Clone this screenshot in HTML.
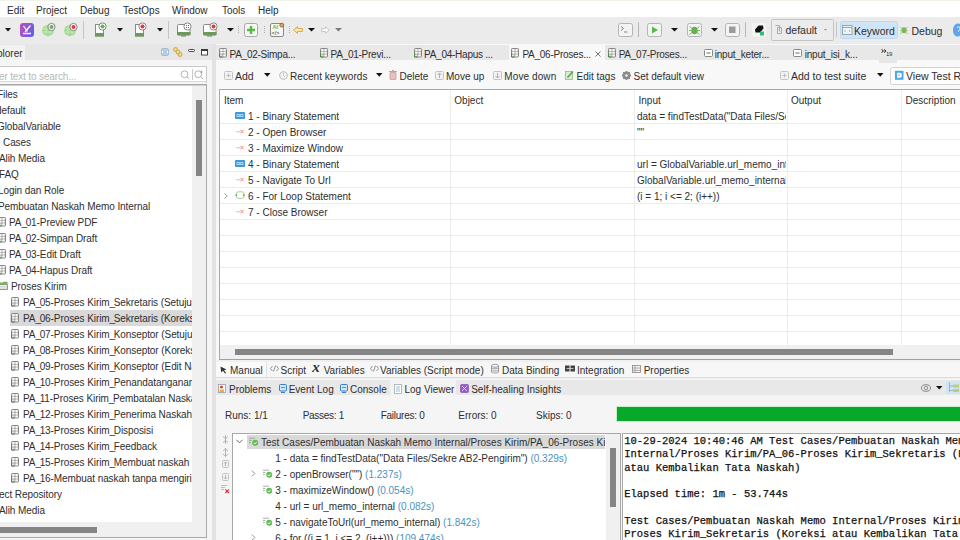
<!DOCTYPE html>
<html><head><meta charset="utf-8">
<style>
*{margin:0;padding:0;box-sizing:border-box}
html,body{width:960px;height:540px;overflow:hidden;background:#f0f0f0}
body{position:relative;font-family:"Liberation Sans",sans-serif;font-size:10px;color:#2e2e2e}
.a{position:absolute;overflow:hidden}
svg.a{overflow:visible}
.t{position:absolute;white-space:nowrap}
.m{position:absolute;white-space:pre;font-family:"Liberation Mono",monospace}
</style></head><body>
<div class="a" style="left:0px;top:0px;width:960px;height:17px;background:#fff;"></div>
<div class="a" style="left:0px;top:0px;width:960px;height:1px;background:#eef5e8;"></div>
<div class="t" style="left:7px;top:4.79px;font-size:10px;line-height:11.50px;color:#2a2a2a;">Edit</div>
<div class="t" style="left:36px;top:4.79px;font-size:10px;line-height:11.50px;color:#2a2a2a;">Project</div>
<div class="t" style="left:80px;top:4.79px;font-size:10px;line-height:11.50px;color:#2a2a2a;">Debug</div>
<div class="t" style="left:123px;top:4.79px;font-size:10px;line-height:11.50px;color:#2a2a2a;">TestOps</div>
<div class="t" style="left:172px;top:4.79px;font-size:10px;line-height:11.50px;color:#2a2a2a;">Window</div>
<div class="t" style="left:222px;top:4.79px;font-size:10px;line-height:11.50px;color:#2a2a2a;">Tools</div>
<div class="t" style="left:258px;top:4.79px;font-size:10px;line-height:11.50px;color:#2a2a2a;">Help</div>
<div class="a" style="left:0px;top:17px;width:960px;height:27px;background:#ebebeb;"></div>
<svg class="a" style="left:5px;top:28px" width="6" height="3.5" viewBox="0 0 6 3.5"><path d="M0 0H6L3.0 3.5Z" fill="#111"/></svg>
<svg class="a" style="left:20px;top:23px" width="14" height="14" viewBox="0 0 14 14"><defs><linearGradient id="pg" x1="0" y1="0" x2="1" y2="0.3"><stop offset="0" stop-color="#c24cc0"/><stop offset="1" stop-color="#6a5fe2"/></linearGradient></defs><rect x="0" y="0" width="14" height="14" rx="3" fill="url(#pg)"/><path d="M3.5 3L7.5 8.5M10.5 2.5L5 9" stroke="#fff" stroke-width="1.2" fill="none"/><path d="M3 10.5H11" stroke="#f0e8ff" stroke-width="1.5"/></svg>
<svg class="a" style="left:42px;top:22px" width="16" height="16" viewBox="0 0 16 16"><circle cx="6" cy="8.5" r="5.8" fill="#9fd68f"/><path d="M1 7H11M1 10H11M4 3V14M8 3V14" stroke="#c9efc0" stroke-width="0.9"/><circle cx="9.5" cy="5" r="3.6" fill="#fff" stroke="#7a7a7a" stroke-width="0.9"/><circle cx="9.5" cy="5" r="2" fill="#5cb84c"/></svg>
<svg class="a" style="left:64px;top:22px" width="16" height="16" viewBox="0 0 16 16"><circle cx="6" cy="8.5" r="5.8" fill="#9fd68f"/><path d="M1 7H11M1 10H11M4 3V14M8 3V14" stroke="#c9efc0" stroke-width="0.9"/><circle cx="9.5" cy="5" r="3.6" fill="#fff" stroke="#7a7a7a" stroke-width="0.9"/><circle cx="9.5" cy="5" r="2" fill="#e23a32"/></svg>
<div class="a" style="left:83px;top:21px;width:1px;height:18px;background:#c4c4c4;"></div>
<svg class="a" style="left:95px;top:22px" width="14" height="15" viewBox="0 0 14 15"><rect x="0.5" y="2.5" width="8" height="11.5" fill="#fff" stroke="#8a8a8a"/><rect x="0" y="11" width="9" height="3.5" fill="#6d9a5c"/><circle cx="7.5" cy="4.5" r="3.6" fill="#fff" stroke="#7a7a7a" stroke-width="0.9"/><circle cx="7.5" cy="4.5" r="2" fill="#5cb84c"/></svg>
<svg class="a" style="left:117px;top:28px" width="6" height="3.5" viewBox="0 0 6 3.5"><path d="M0 0H6L3.0 3.5Z" fill="#111"/></svg>
<svg class="a" style="left:135px;top:22px" width="14" height="15" viewBox="0 0 14 15"><rect x="0.5" y="2.5" width="8" height="11.5" fill="#fff" stroke="#8a8a8a"/><rect x="0" y="11" width="9" height="3.5" fill="#6d9a5c"/><circle cx="7.5" cy="4.5" r="3.6" fill="#fff" stroke="#7a7a7a" stroke-width="0.9"/><circle cx="7.5" cy="4.5" r="2" fill="#e23a32"/></svg>
<svg class="a" style="left:157px;top:28px" width="6" height="3.5" viewBox="0 0 6 3.5"><path d="M0 0H6L3.0 3.5Z" fill="#111"/></svg>
<div class="a" style="left:168px;top:21px;width:1px;height:18px;background:#c4c4c4;"></div>
<svg class="a" style="left:177px;top:22px" width="16" height="15" viewBox="0 0 16 15"><rect x="0.5" y="2.5" width="12.5" height="10.5" rx="1" fill="#fff" stroke="#8a8a8a"/><rect x="0" y="10" width="13.5" height="3.2" fill="#6d9a5c"/><rect x="4" y="13.5" width="5" height="1" fill="#777"/><circle cx="10.5" cy="4.5" r="3.6" fill="#fff" stroke="#7a7a7a" stroke-width="0.9"/><path d="M9 3.5h1M11 3.5h1M9 5.5h1M11 5.5h1" stroke="#666"/></svg>
<svg class="a" style="left:203px;top:22px" width="16" height="15" viewBox="0 0 16 15"><rect x="0.5" y="2.5" width="12.5" height="10.5" rx="1" fill="#fff" stroke="#8a8a8a"/><rect x="0" y="10" width="13.5" height="3.2" fill="#6d9a5c"/><rect x="4" y="13.5" width="5" height="1" fill="#777"/><circle cx="10.5" cy="4.5" r="3.6" fill="#fff" stroke="#7a7a7a" stroke-width="0.9"/><circle cx="10.5" cy="4.5" r="2" fill="#e23a32"/></svg>
<svg class="a" style="left:227px;top:28px" width="7" height="3.5" viewBox="0 0 7 3.5"><path d="M0 0H7L3.5 3.5Z" fill="#111"/></svg>
<svg class="a" style="left:238px;top:26px" width="1" height="8" viewBox="0 0 1 8"><path d="M0.5 0V8" stroke="#b0b0b0" stroke-dasharray="1 1"/></svg>
<svg class="a" style="left:244px;top:23px" width="14" height="14" viewBox="0 0 14 14"><rect x="0.5" y="0.5" width="13" height="13" rx="2" fill="#f6f6f6" stroke="#a8a8a8"/><path d="M7 3V11M3 7H11" stroke="#56b946" stroke-width="2.4"/></svg>
<svg class="a" style="left:264px;top:26px" width="1" height="8" viewBox="0 0 1 8"><path d="M0.5 0V8" stroke="#b0b0b0" stroke-dasharray="1 1"/></svg>
<svg class="a" style="left:270px;top:23px" width="14" height="14" viewBox="0 0 14 14"><rect x="0.5" y="0.5" width="13" height="13" rx="1.5" fill="#f6f6f6" stroke="#8a8a8a"/><text x="2.5" y="6" font-size="5.5" font-family="Liberation Sans" fill="#5cb84c" font-weight="bold">AI</text><text x="1.6" y="11.8" font-size="5.5" font-family="Liberation Sans" fill="#222">&lt;/&gt;</text><circle cx="11.8" cy="2.2" r="2" fill="#e0a050" stroke="#7a5a30" stroke-width="0.6"/></svg>
<svg class="a" style="left:289px;top:26px" width="1" height="8" viewBox="0 0 1 8"><path d="M0.5 0V8" stroke="#b0b0b0" stroke-dasharray="1 1"/></svg>
<svg class="a" style="left:293px;top:26px" width="10" height="8" viewBox="0 0 10 8"><path d="M0.6 4L4.5 0.6V2.5H9.4V5.5H4.5V7.4Z" fill="#fbe8a6" stroke="#d9a33c" stroke-width="0.9"/></svg>
<svg class="a" style="left:308px;top:28px" width="7" height="3.5" viewBox="0 0 7 3.5"><path d="M0 0H7L3.5 3.5Z" fill="#111"/></svg>
<svg class="a" style="left:321px;top:26px" width="9" height="8" viewBox="0 0 9 8"><path d="M8.4 4L4.5 0.6V2.5H0.6V5.5H4.5V7.4Z" fill="#f8f8f8" stroke="#c6c6c6" stroke-width="0.9"/></svg>
<svg class="a" style="left:335px;top:28px" width="7" height="3.5" viewBox="0 0 7 3.5"><path d="M0 0H7L3.5 3.5Z" fill="#7a7a7a"/></svg>
<svg class="a" style="left:618px;top:23px" width="15" height="14" viewBox="0 0 15 14"><rect x="0.5" y="0.5" width="14" height="13" rx="2" fill="#f4f4f4" stroke="#b4b4b4"/><path d="M3 3.5L5.5 5.5L3 7.5M6 9H9.5" stroke="#777" fill="none" stroke-width="0.9"/></svg>
<div class="a" style="left:638px;top:22px;width:1px;height:15px;background:#b8b8b8;"></div>
<svg class="a" style="left:647px;top:23px" width="15" height="14" viewBox="0 0 15 14"><rect x="0.5" y="0.5" width="14" height="13" rx="2" fill="#f4f4f4" stroke="#b4b4b4"/><path d="M5 3.5V10.5L11 7Z" fill="#5cb84c"/></svg>
<svg class="a" style="left:671px;top:28px" width="7" height="3.5" viewBox="0 0 7 3.5"><path d="M0 0H7L3.5 3.5Z" fill="#111"/></svg>
<svg class="a" style="left:687px;top:23px" width="15" height="14" viewBox="0 0 15 14"><rect x="0.5" y="0.5" width="14" height="13" rx="2" fill="#f4f4f4" stroke="#b4b4b4"/><ellipse cx="7.5" cy="7.5" rx="3.2" ry="3.8" fill="#6aae52"/><path d="M2.5 3.5L5 5.5M12.5 3.5L10 5.5M2 7.5H4.5M13 7.5H10.5M2.5 11.5L5 9.5M12.5 11.5L10 9.5" stroke="#6aae52" stroke-width="0.9"/></svg>
<svg class="a" style="left:711px;top:28px" width="7" height="3.5" viewBox="0 0 7 3.5"><path d="M0 0H7L3.5 3.5Z" fill="#111"/></svg>
<svg class="a" style="left:725px;top:23px" width="15" height="14" viewBox="0 0 15 14"><rect x="0.5" y="0.5" width="14" height="13" rx="2" fill="#f4f4f4" stroke="#b4b4b4"/><rect x="4" y="3.5" width="6.5" height="6.5" fill="#9a9a9a"/></svg>
<div class="a" style="left:745px;top:22px;width:1px;height:15px;background:#b8b8b8;"></div>
<svg class="a" style="left:752px;top:23px" width="14" height="14" viewBox="0 0 14 14"><rect x="0" y="0" width="14" height="14" rx="3" fill="#f4f4f4"/><path d="M3 6.5L6.5 2.5H11L11.5 5.5L8 9.5H3.5Z" fill="#111"/><rect x="8" y="8.5" width="4" height="4" fill="#2fbf7f"/></svg>
<svg class="a" style="left:771px;top:19px" width="63" height="22" viewBox="0 0 63 22"><rect x="0.5" y="0.5" width="62" height="21" rx="1" fill="#ececec" stroke="#c4c4c4"/><path d="M6.5 8.5h4v6h-4zM4.5 6.5h4v6" fill="none" stroke="#7cc26a" stroke-width="0.9"/><path d="M53 10h3l-1.5 1.6z" fill="#888"/></svg>
<div class="t" style="left:785.5px;top:24.32px;font-size:10.5px;line-height:12.07px;color:#2e2e2e;">default</div>
<div class="a" style="left:836px;top:22px;width:1px;height:15px;background:#c4c4c4;"></div>
<svg class="a" style="left:840px;top:21px" width="58" height="18" viewBox="0 0 58 18"><rect x="0.5" y="0.5" width="57" height="17" rx="2" fill="#cfe5f7" stroke="#bcd9f0"/><rect x="2.5" y="4.5" width="9.5" height="9" fill="#eef4f8" stroke="#8aa0a8" stroke-width="0.9"/><path d="M2.5 6.5h9.5" stroke="#8aa0a8" stroke-width="0.9"/><path d="M5.5 9L4.5 10L5.5 11M9 9L10 10L9 11" stroke="#8aa0a8" stroke-width="0.7" fill="none"/></svg>
<div class="t" style="left:854px;top:25.32px;font-size:10.5px;line-height:12.07px;color:#2e2e2e;">Keyword</div>
<svg class="a" style="left:900px;top:26px" width="8" height="8" viewBox="0 0 8 8"><ellipse cx="4" cy="4.2" rx="2.6" ry="3" fill="#7ab85a"/><path d="M0 1L2 2.5M8 1L6 2.5M0 4.5H1.5M8 4.5H6.5M0 8L2 6.5M8 8L6 6.5" stroke="#9ac87a" stroke-width="0.8"/></svg>
<div class="t" style="left:911.5px;top:25.32px;font-size:10.5px;line-height:12.07px;color:#2e2e2e;">Debug</div>
<svg class="a" style="left:953px;top:23px" width="10" height="14" viewBox="0 0 10 14"><path d="M5 0.5C8 0.5 10 3 10 6.5C10 10.5 7.5 13.5 4.5 13.5C1.8 13.5 0 11 0 7C0 3 2.5 0.5 5 0.5Z" fill="#5ea4ea"/><path d="M4 4.5C4.5 3.5 7 3.5 7 5.5C7 7 5.5 7 5.5 8.5" stroke="#fff" stroke-width="1" fill="none"/></svg>
<div class="a" style="left:0px;top:44px;width:212px;height:496px;background:#f5f5f5;"></div>
<div class="a" style="left:0px;top:44px;width:212px;height:16px;background:#e6e6e6;"></div>
<div class="a" style="left:0px;top:45px;width:25px;height:15px;background:#f3f3f3;"></div>
<div class="t" style="left:-3px;top:47.78px;font-size:10px;line-height:11.50px;color:#2e2e2e;">plorer</div>
<div class="a" style="left:0px;top:66px;width:207px;height:1px;background:#c9c9c9;"></div>
<div class="a" style="left:206px;top:66px;width:1px;height:17px;background:#c9c9c9;"></div>
<div class="a" style="left:0px;top:67px;width:206px;height:14px;background:#fff;"></div>
<div class="a" style="left:0px;top:81px;width:206px;height:1px;background:#dadada;"></div>
<div class="t" style="left:-1px;top:70.78px;font-size:10px;line-height:11.50px;color:#b8b8b8;letter-spacing:-0.15px">er text to search...</div>
<svg class="a" style="left:161px;top:48px" width="8" height="8" viewBox="0 0 8 8"><rect x="0.5" y="0.5" width="7" height="7" rx="1.5" fill="#b8d0e4" stroke="#9ab4cc" stroke-width="0.8"/><path d="M1 4H7" stroke="#fff" stroke-width="2"/><path d="M2 4H6" stroke="#4a86c0" stroke-width="0.9"/></svg>
<svg class="a" style="left:173px;top:47px" width="9" height="10" viewBox="0 0 9 10"><circle cx="2.5" cy="2.5" r="1.8" fill="none" stroke="#d9b040" stroke-width="1.3"/><circle cx="5" cy="5" r="1.8" fill="none" stroke="#d9b040" stroke-width="1.3"/><circle cx="7" cy="7.5" r="1.8" fill="none" stroke="#d9b040" stroke-width="1.3"/></svg>
<svg class="a" style="left:187.5px;top:49px" width="7" height="3" viewBox="0 0 7 3"><rect x="0.5" y="0.5" width="6" height="2" rx="1" fill="#fff" stroke="#333" stroke-width="0.9"/></svg>
<svg class="a" style="left:200.5px;top:49px" width="7" height="6.5" viewBox="0 0 7 6.5"><rect x="0.5" y="0.5" width="6" height="5.5" fill="#fff" stroke="#333" stroke-width="0.9"/><path d="M0.5 1.3H6.5" stroke="#333" stroke-width="1.4"/></svg>
<svg class="a" style="left:180px;top:70px" width="10" height="10" viewBox="0 0 10 10"><circle cx="4.5" cy="4.2" r="3.4" fill="none" stroke="#a8a8a8" stroke-width="0.9"/><path d="M7 6.8L9.3 9.3" stroke="#a8a8a8" stroke-width="0.9"/></svg>
<div class="a" style="left:192px;top:69px;width:1px;height:11px;background:#c8c8c8;"></div>
<svg class="a" style="left:194px;top:70px" width="10" height="10" viewBox="0 0 10 10"><circle cx="4.2" cy="4.2" r="3.4" fill="none" stroke="#a8a8a8" stroke-width="0.9"/><path d="M6.8 6.8L9.3 9.3" stroke="#a8a8a8" stroke-width="0.9"/><path d="M7.5 0.5V3.5M6 2H9" stroke="#a8a8a8" stroke-width="0.8"/></svg>
<div class="a" style="left:0px;top:84px;width:207px;height:1px;background:#a9a9a9;"></div>
<div class="a" style="left:0px;top:85px;width:207px;height:1px;background:#d0d0d0;"></div>
<div class="a" style="left:206px;top:84px;width:1px;height:454px;background:#a9a9a9;"></div>
<div class="a" style="left:0px;top:537px;width:207px;height:1px;background:#a9a9a9;"></div>
<div class="a" style="left:0px;top:86px;width:192px;height:436px;background:#fff;"></div>
<div class="a" style="left:192px;top:86px;width:14px;height:451px;background:#f0f0f0;"></div>
<div class="a" style="left:196px;top:100px;width:6px;height:76px;background:#858585;"></div>
<div class="a" style="left:0px;top:522px;width:192px;height:15px;background:#f0f0f0;"></div>
<div class="a" style="left:0px;top:527px;width:97px;height:6px;background:#858585;"></div>
<div class="a" style="left:0;top:86px;width:192px;height:436px">
<div class="t" style="left:-3px;top:2.79px;font-size:10px;line-height:11.5px;letter-spacing:-0.08px">Files</div>
<div class="t" style="left:-4px;top:18.79px;font-size:10px;line-height:11.5px;letter-spacing:-0.08px">default</div>
<div class="t" style="left:-3px;top:34.78px;font-size:10px;line-height:11.5px;letter-spacing:-0.08px">GlobalVariable</div>
<div class="t" style="left:3px;top:50.78px;font-size:10px;line-height:11.5px;letter-spacing:-0.08px">Cases</div>
<div class="t" style="left:-1px;top:66.78px;font-size:10px;line-height:11.5px;letter-spacing:-0.08px">Alih Media</div>
<div class="t" style="left:-1px;top:82.78px;font-size:10px;line-height:11.5px;letter-spacing:-0.08px">FAQ</div>
<div class="t" style="left:-2px;top:98.78px;font-size:10px;line-height:11.5px;letter-spacing:-0.08px">Login dan Role</div>
<div class="t" style="left:-2px;top:114.78px;font-size:10px;line-height:11.5px;letter-spacing:-0.08px">Pembuatan Naskah Memo Internal</div>
<svg class="a" style="left:-2px;top:131px" width="8" height="10" viewBox="0 0 8 10"><rect x="0.5" y="0.5" width="7" height="8.5" rx="0.8" fill="#e4e4e4" stroke="#7a7a7a" stroke-width="0.9"/><path d="M1 3.3H7M1 6H7M4 1V8.5" stroke="#8a8a8a" stroke-width="0.8"/><path d="M1.5 3.8h2v1.8h-2zM4.5 3.8h2v1.8h-2zM1.5 1.3h2v1.6h-2zM4.5 1.3h2v1.6h-2zM4.5 6.5h2v1.8h-2z" fill="#fafafa"/><path d="M0.5 5.5V9H3.5" stroke="#4a8a3a" stroke-width="1" fill="none"/></svg>
<div class="t" style="left:9px;top:130.78px;font-size:10px;line-height:11.5px;letter-spacing:-0.08px">PA<span style="letter-spacing:-1.4px">_</span>01-Preview PDF</div>
<svg class="a" style="left:-2px;top:147px" width="8" height="10" viewBox="0 0 8 10"><rect x="0.5" y="0.5" width="7" height="8.5" rx="0.8" fill="#e4e4e4" stroke="#7a7a7a" stroke-width="0.9"/><path d="M1 3.3H7M1 6H7M4 1V8.5" stroke="#8a8a8a" stroke-width="0.8"/><path d="M1.5 3.8h2v1.8h-2zM4.5 3.8h2v1.8h-2zM1.5 1.3h2v1.6h-2zM4.5 1.3h2v1.6h-2zM4.5 6.5h2v1.8h-2z" fill="#fafafa"/><path d="M0.5 5.5V9H3.5" stroke="#4a8a3a" stroke-width="1" fill="none"/></svg>
<div class="t" style="left:9px;top:146.78px;font-size:10px;line-height:11.5px;letter-spacing:-0.08px">PA<span style="letter-spacing:-1.4px">_</span>02-Simpan Draft</div>
<svg class="a" style="left:-2px;top:163px" width="8" height="10" viewBox="0 0 8 10"><rect x="0.5" y="0.5" width="7" height="8.5" rx="0.8" fill="#e4e4e4" stroke="#7a7a7a" stroke-width="0.9"/><path d="M1 3.3H7M1 6H7M4 1V8.5" stroke="#8a8a8a" stroke-width="0.8"/><path d="M1.5 3.8h2v1.8h-2zM4.5 3.8h2v1.8h-2zM1.5 1.3h2v1.6h-2zM4.5 1.3h2v1.6h-2zM4.5 6.5h2v1.8h-2z" fill="#fafafa"/><path d="M0.5 5.5V9H3.5" stroke="#4a8a3a" stroke-width="1" fill="none"/></svg>
<div class="t" style="left:9px;top:162.78px;font-size:10px;line-height:11.5px;letter-spacing:-0.08px">PA<span style="letter-spacing:-1.4px">_</span>03-Edit Draft</div>
<svg class="a" style="left:-2px;top:179px" width="8" height="10" viewBox="0 0 8 10"><rect x="0.5" y="0.5" width="7" height="8.5" rx="0.8" fill="#e4e4e4" stroke="#7a7a7a" stroke-width="0.9"/><path d="M1 3.3H7M1 6H7M4 1V8.5" stroke="#8a8a8a" stroke-width="0.8"/><path d="M1.5 3.8h2v1.8h-2zM4.5 3.8h2v1.8h-2zM1.5 1.3h2v1.6h-2zM4.5 1.3h2v1.6h-2zM4.5 6.5h2v1.8h-2z" fill="#fafafa"/><path d="M0.5 5.5V9H3.5" stroke="#4a8a3a" stroke-width="1" fill="none"/></svg>
<div class="t" style="left:9px;top:178.78px;font-size:10px;line-height:11.5px;letter-spacing:-0.08px">PA<span style="letter-spacing:-1.4px">_</span>04-Hapus Draft</div>
<svg class="a" style="left:-1px;top:195px" width="9" height="10" viewBox="0 0 9 10"><path d="M0.5 3.5H8.5V8.5H0.5Z" fill="#f0f0f0" stroke="#8a8a8a" stroke-width="0.9"/><path d="M0 1.5H3.5L4.5 0.8H8.5V3.6H0Z" fill="#6cb85a"/><path d="M1 5.5H8M1 7H8" stroke="#c8c8c8" stroke-width="0.7"/></svg>
<div class="t" style="left:11px;top:194.78px;font-size:10px;line-height:11.5px;letter-spacing:-0.08px">Proses Kirim</div>
<svg class="a" style="left:11px;top:211px" width="8" height="10" viewBox="0 0 8 10"><rect x="0.5" y="0.5" width="7" height="8.5" rx="0.8" fill="#e4e4e4" stroke="#7a7a7a" stroke-width="0.9"/><path d="M1 3.3H7M1 6H7M4 1V8.5" stroke="#8a8a8a" stroke-width="0.8"/><path d="M1.5 3.8h2v1.8h-2zM4.5 3.8h2v1.8h-2zM1.5 1.3h2v1.6h-2zM4.5 1.3h2v1.6h-2zM4.5 6.5h2v1.8h-2z" fill="#fafafa"/><path d="M0.5 5.5V9H3.5" stroke="#4a8a3a" stroke-width="1" fill="none"/></svg>
<div class="t" style="left:23px;top:210.78px;font-size:10px;line-height:11.5px;letter-spacing:-0.08px">PA<span style="letter-spacing:-1.4px">_</span>05-Proses Kirim<span style="letter-spacing:-1.4px">_</span>Sekretaris (Setuju)</div>
<div class="a" style="left:9.5px;top:224px;width:182px;height:15.5px;background:#d9d9d9"></div>
<svg class="a" style="left:11px;top:227px" width="8" height="10" viewBox="0 0 8 10"><rect x="0.5" y="0.5" width="7" height="8.5" rx="0.8" fill="#e4e4e4" stroke="#7a7a7a" stroke-width="0.9"/><path d="M1 3.3H7M1 6H7M4 1V8.5" stroke="#8a8a8a" stroke-width="0.8"/><path d="M1.5 3.8h2v1.8h-2zM4.5 3.8h2v1.8h-2zM1.5 1.3h2v1.6h-2zM4.5 1.3h2v1.6h-2zM4.5 6.5h2v1.8h-2z" fill="#fafafa"/><path d="M0.5 5.5V9H3.5" stroke="#4a8a3a" stroke-width="1" fill="none"/></svg>
<div class="t" style="left:23px;top:226.78px;font-size:10px;line-height:11.5px;letter-spacing:-0.08px">PA<span style="letter-spacing:-1.4px">_</span>06-Proses Kirim<span style="letter-spacing:-1.4px">_</span>Sekretaris (Koreksi atau Kembalikan)</div>
<svg class="a" style="left:11px;top:243px" width="8" height="10" viewBox="0 0 8 10"><rect x="0.5" y="0.5" width="7" height="8.5" rx="0.8" fill="#e4e4e4" stroke="#7a7a7a" stroke-width="0.9"/><path d="M1 3.3H7M1 6H7M4 1V8.5" stroke="#8a8a8a" stroke-width="0.8"/><path d="M1.5 3.8h2v1.8h-2zM4.5 3.8h2v1.8h-2zM1.5 1.3h2v1.6h-2zM4.5 1.3h2v1.6h-2zM4.5 6.5h2v1.8h-2z" fill="#fafafa"/><path d="M0.5 5.5V9H3.5" stroke="#4a8a3a" stroke-width="1" fill="none"/></svg>
<div class="t" style="left:23px;top:242.78px;font-size:10px;line-height:11.5px;letter-spacing:-0.08px">PA<span style="letter-spacing:-1.4px">_</span>07-Proses Kirim<span style="letter-spacing:-1.4px">_</span>Konseptor (Setuju)</div>
<svg class="a" style="left:11px;top:259px" width="8" height="10" viewBox="0 0 8 10"><rect x="0.5" y="0.5" width="7" height="8.5" rx="0.8" fill="#e4e4e4" stroke="#7a7a7a" stroke-width="0.9"/><path d="M1 3.3H7M1 6H7M4 1V8.5" stroke="#8a8a8a" stroke-width="0.8"/><path d="M1.5 3.8h2v1.8h-2zM4.5 3.8h2v1.8h-2zM1.5 1.3h2v1.6h-2zM4.5 1.3h2v1.6h-2zM4.5 6.5h2v1.8h-2z" fill="#fafafa"/><path d="M0.5 5.5V9H3.5" stroke="#4a8a3a" stroke-width="1" fill="none"/></svg>
<div class="t" style="left:23px;top:258.79px;font-size:10px;line-height:11.5px;letter-spacing:-0.08px">PA<span style="letter-spacing:-1.4px">_</span>08-Proses Kirim<span style="letter-spacing:-1.4px">_</span>Konseptor (Koreksi)</div>
<svg class="a" style="left:11px;top:275px" width="8" height="10" viewBox="0 0 8 10"><rect x="0.5" y="0.5" width="7" height="8.5" rx="0.8" fill="#e4e4e4" stroke="#7a7a7a" stroke-width="0.9"/><path d="M1 3.3H7M1 6H7M4 1V8.5" stroke="#8a8a8a" stroke-width="0.8"/><path d="M1.5 3.8h2v1.8h-2zM4.5 3.8h2v1.8h-2zM1.5 1.3h2v1.6h-2zM4.5 1.3h2v1.6h-2zM4.5 6.5h2v1.8h-2z" fill="#fafafa"/><path d="M0.5 5.5V9H3.5" stroke="#4a8a3a" stroke-width="1" fill="none"/></svg>
<div class="t" style="left:23px;top:274.79px;font-size:10px;line-height:11.5px;letter-spacing:-0.08px">PA<span style="letter-spacing:-1.4px">_</span>09-Proses Kirim<span style="letter-spacing:-1.4px">_</span>Konseptor (Edit Naskah)</div>
<svg class="a" style="left:11px;top:291px" width="8" height="10" viewBox="0 0 8 10"><rect x="0.5" y="0.5" width="7" height="8.5" rx="0.8" fill="#e4e4e4" stroke="#7a7a7a" stroke-width="0.9"/><path d="M1 3.3H7M1 6H7M4 1V8.5" stroke="#8a8a8a" stroke-width="0.8"/><path d="M1.5 3.8h2v1.8h-2zM4.5 3.8h2v1.8h-2zM1.5 1.3h2v1.6h-2zM4.5 1.3h2v1.6h-2zM4.5 6.5h2v1.8h-2z" fill="#fafafa"/><path d="M0.5 5.5V9H3.5" stroke="#4a8a3a" stroke-width="1" fill="none"/></svg>
<div class="t" style="left:23px;top:290.79px;font-size:10px;line-height:11.5px;letter-spacing:-0.08px">PA<span style="letter-spacing:-1.4px">_</span>10-Proses Kirim<span style="letter-spacing:-1.4px">_</span>Penandatanganan</div>
<svg class="a" style="left:11px;top:307px" width="8" height="10" viewBox="0 0 8 10"><rect x="0.5" y="0.5" width="7" height="8.5" rx="0.8" fill="#e4e4e4" stroke="#7a7a7a" stroke-width="0.9"/><path d="M1 3.3H7M1 6H7M4 1V8.5" stroke="#8a8a8a" stroke-width="0.8"/><path d="M1.5 3.8h2v1.8h-2zM4.5 3.8h2v1.8h-2zM1.5 1.3h2v1.6h-2zM4.5 1.3h2v1.6h-2zM4.5 6.5h2v1.8h-2z" fill="#fafafa"/><path d="M0.5 5.5V9H3.5" stroke="#4a8a3a" stroke-width="1" fill="none"/></svg>
<div class="t" style="left:23px;top:306.79px;font-size:10px;line-height:11.5px;letter-spacing:-0.08px">PA<span style="letter-spacing:-1.4px">_</span>11-Proses Kirim<span style="letter-spacing:-1.4px">_</span>Pembatalan Naskah</div>
<svg class="a" style="left:11px;top:323px" width="8" height="10" viewBox="0 0 8 10"><rect x="0.5" y="0.5" width="7" height="8.5" rx="0.8" fill="#e4e4e4" stroke="#7a7a7a" stroke-width="0.9"/><path d="M1 3.3H7M1 6H7M4 1V8.5" stroke="#8a8a8a" stroke-width="0.8"/><path d="M1.5 3.8h2v1.8h-2zM4.5 3.8h2v1.8h-2zM1.5 1.3h2v1.6h-2zM4.5 1.3h2v1.6h-2zM4.5 6.5h2v1.8h-2z" fill="#fafafa"/><path d="M0.5 5.5V9H3.5" stroke="#4a8a3a" stroke-width="1" fill="none"/></svg>
<div class="t" style="left:23px;top:322.79px;font-size:10px;line-height:11.5px;letter-spacing:-0.08px">PA<span style="letter-spacing:-1.4px">_</span>12-Proses Kirim<span style="letter-spacing:-1.4px">_</span>Penerima Naskah</div>
<svg class="a" style="left:11px;top:339px" width="8" height="10" viewBox="0 0 8 10"><rect x="0.5" y="0.5" width="7" height="8.5" rx="0.8" fill="#e4e4e4" stroke="#7a7a7a" stroke-width="0.9"/><path d="M1 3.3H7M1 6H7M4 1V8.5" stroke="#8a8a8a" stroke-width="0.8"/><path d="M1.5 3.8h2v1.8h-2zM4.5 3.8h2v1.8h-2zM1.5 1.3h2v1.6h-2zM4.5 1.3h2v1.6h-2zM4.5 6.5h2v1.8h-2z" fill="#fafafa"/><path d="M0.5 5.5V9H3.5" stroke="#4a8a3a" stroke-width="1" fill="none"/></svg>
<div class="t" style="left:23px;top:338.79px;font-size:10px;line-height:11.5px;letter-spacing:-0.08px">PA<span style="letter-spacing:-1.4px">_</span>13-Proses Kirim<span style="letter-spacing:-1.4px">_</span>Disposisi</div>
<svg class="a" style="left:11px;top:355px" width="8" height="10" viewBox="0 0 8 10"><rect x="0.5" y="0.5" width="7" height="8.5" rx="0.8" fill="#e4e4e4" stroke="#7a7a7a" stroke-width="0.9"/><path d="M1 3.3H7M1 6H7M4 1V8.5" stroke="#8a8a8a" stroke-width="0.8"/><path d="M1.5 3.8h2v1.8h-2zM4.5 3.8h2v1.8h-2zM1.5 1.3h2v1.6h-2zM4.5 1.3h2v1.6h-2zM4.5 6.5h2v1.8h-2z" fill="#fafafa"/><path d="M0.5 5.5V9H3.5" stroke="#4a8a3a" stroke-width="1" fill="none"/></svg>
<div class="t" style="left:23px;top:354.79px;font-size:10px;line-height:11.5px;letter-spacing:-0.08px">PA<span style="letter-spacing:-1.4px">_</span>14-Proses Kirim<span style="letter-spacing:-1.4px">_</span>Feedback</div>
<svg class="a" style="left:11px;top:371px" width="8" height="10" viewBox="0 0 8 10"><rect x="0.5" y="0.5" width="7" height="8.5" rx="0.8" fill="#e4e4e4" stroke="#7a7a7a" stroke-width="0.9"/><path d="M1 3.3H7M1 6H7M4 1V8.5" stroke="#8a8a8a" stroke-width="0.8"/><path d="M1.5 3.8h2v1.8h-2zM4.5 3.8h2v1.8h-2zM1.5 1.3h2v1.6h-2zM4.5 1.3h2v1.6h-2zM4.5 6.5h2v1.8h-2z" fill="#fafafa"/><path d="M0.5 5.5V9H3.5" stroke="#4a8a3a" stroke-width="1" fill="none"/></svg>
<div class="t" style="left:23px;top:370.79px;font-size:10px;line-height:11.5px;letter-spacing:-0.08px">PA<span style="letter-spacing:-1.4px">_</span>15-Proses Kirim<span style="letter-spacing:-1.4px">_</span>Membuat naskah</div>
<svg class="a" style="left:11px;top:387px" width="8" height="10" viewBox="0 0 8 10"><rect x="0.5" y="0.5" width="7" height="8.5" rx="0.8" fill="#e4e4e4" stroke="#7a7a7a" stroke-width="0.9"/><path d="M1 3.3H7M1 6H7M4 1V8.5" stroke="#8a8a8a" stroke-width="0.8"/><path d="M1.5 3.8h2v1.8h-2zM4.5 3.8h2v1.8h-2zM1.5 1.3h2v1.6h-2zM4.5 1.3h2v1.6h-2zM4.5 6.5h2v1.8h-2z" fill="#fafafa"/><path d="M0.5 5.5V9H3.5" stroke="#4a8a3a" stroke-width="1" fill="none"/></svg>
<div class="t" style="left:23px;top:386.79px;font-size:10px;line-height:11.5px;letter-spacing:-0.08px">PA<span style="letter-spacing:-1.4px">_</span>16-Membuat naskah tanpa mengirim</div>
<div class="t" style="left:-1px;top:402.79px;font-size:10px;line-height:11.5px;letter-spacing:-0.08px">ect Repository</div>
<div class="t" style="left:-1px;top:418.79px;font-size:10px;line-height:11.5px;letter-spacing:-0.08px">Alih Media</div>
</div>
<div class="a" style="left:212px;top:44px;width:4px;height:496px;background:#e2e2e2;"></div>
<div class="a" style="left:216px;top:44px;width:744px;height:336px;background:#f8f8f8;"></div>
<div class="a" style="left:216px;top:45px;width:744px;height:15px;background:#e8e8e8;"></div>
<div class="a" style="left:509px;top:45px;width:96px;height:15px;background:#f8f8f8;"></div>
<svg class="a" style="left:219px;top:48px" width="8" height="10" viewBox="0 0 8 10"><rect x="0.5" y="0.5" width="7" height="8.5" rx="0.8" fill="#e4e4e4" stroke="#7a7a7a" stroke-width="0.9"/><path d="M1 3.3H7M1 6H7M4 1V8.5" stroke="#8a8a8a" stroke-width="0.8"/><path d="M1.5 3.8h2v1.8h-2zM4.5 3.8h2v1.8h-2zM1.5 1.3h2v1.6h-2zM4.5 1.3h2v1.6h-2zM4.5 6.5h2v1.8h-2z" fill="#fafafa"/><path d="M0.5 5.5V9H3.5" stroke="#4a8a3a" stroke-width="1" fill="none"/></svg>
<div class="t" style="left:229.5px;top:48.78px;font-size:10px;line-height:11.50px;color:#2e2e2e;letter-spacing:-0.25px">PA_02-Simpa...</div>
<svg class="a" style="left:320px;top:48px" width="8" height="10" viewBox="0 0 8 10"><rect x="0.5" y="0.5" width="7" height="8.5" rx="0.8" fill="#e4e4e4" stroke="#7a7a7a" stroke-width="0.9"/><path d="M1 3.3H7M1 6H7M4 1V8.5" stroke="#8a8a8a" stroke-width="0.8"/><path d="M1.5 3.8h2v1.8h-2zM4.5 3.8h2v1.8h-2zM1.5 1.3h2v1.6h-2zM4.5 1.3h2v1.6h-2zM4.5 6.5h2v1.8h-2z" fill="#fafafa"/><path d="M0.5 5.5V9H3.5" stroke="#4a8a3a" stroke-width="1" fill="none"/></svg>
<div class="t" style="left:330.5px;top:48.78px;font-size:10px;line-height:11.50px;color:#2e2e2e;letter-spacing:-0.25px">PA_01-Previ...</div>
<svg class="a" style="left:414px;top:48px" width="8" height="10" viewBox="0 0 8 10"><rect x="0.5" y="0.5" width="7" height="8.5" rx="0.8" fill="#e4e4e4" stroke="#7a7a7a" stroke-width="0.9"/><path d="M1 3.3H7M1 6H7M4 1V8.5" stroke="#8a8a8a" stroke-width="0.8"/><path d="M1.5 3.8h2v1.8h-2zM4.5 3.8h2v1.8h-2zM1.5 1.3h2v1.6h-2zM4.5 1.3h2v1.6h-2zM4.5 6.5h2v1.8h-2z" fill="#fafafa"/><path d="M0.5 5.5V9H3.5" stroke="#4a8a3a" stroke-width="1" fill="none"/></svg>
<div class="t" style="left:424px;top:48.78px;font-size:10px;line-height:11.50px;color:#2e2e2e;letter-spacing:-0.25px">PA_04-Hapus ...</div>
<svg class="a" style="left:511px;top:48px" width="8" height="10" viewBox="0 0 8 10"><rect x="0.5" y="0.5" width="7" height="8.5" rx="0.8" fill="#e4e4e4" stroke="#7a7a7a" stroke-width="0.9"/><path d="M1 3.3H7M1 6H7M4 1V8.5" stroke="#8a8a8a" stroke-width="0.8"/><path d="M1.5 3.8h2v1.8h-2zM4.5 3.8h2v1.8h-2zM1.5 1.3h2v1.6h-2zM4.5 1.3h2v1.6h-2zM4.5 6.5h2v1.8h-2z" fill="#fafafa"/><path d="M0.5 5.5V9H3.5" stroke="#4a8a3a" stroke-width="1" fill="none"/></svg>
<div class="t" style="left:522.4px;top:48.78px;font-size:10px;line-height:11.50px;color:#2e2e2e;letter-spacing:-0.25px">PA_06-Proses...</div>
<svg class="a" style="left:608px;top:48px" width="8" height="10" viewBox="0 0 8 10"><rect x="0.5" y="0.5" width="7" height="8.5" rx="0.8" fill="#e4e4e4" stroke="#7a7a7a" stroke-width="0.9"/><path d="M1 3.3H7M1 6H7M4 1V8.5" stroke="#8a8a8a" stroke-width="0.8"/><path d="M1.5 3.8h2v1.8h-2zM4.5 3.8h2v1.8h-2zM1.5 1.3h2v1.6h-2zM4.5 1.3h2v1.6h-2zM4.5 6.5h2v1.8h-2z" fill="#fafafa"/><path d="M0.5 5.5V9H3.5" stroke="#4a8a3a" stroke-width="1" fill="none"/></svg>
<div class="t" style="left:618.7px;top:48.78px;font-size:10px;line-height:11.50px;color:#2e2e2e;letter-spacing:-0.25px">PA_07-Proses...</div>
<svg class="a" style="left:595px;top:50.5px" width="6" height="6" viewBox="0 0 6 6"><path d="M0.5 0.5L5.5 5.5M5.5 0.5L0.5 5.5" stroke="#666" stroke-width="0.9"/></svg>
<svg class="a" style="left:703.5px;top:49px" width="9" height="8" viewBox="0 0 9 8"><rect x="0.5" y="0.5" width="8" height="7" rx="1" fill="#fff" stroke="#888"/><path d="M2.5 4H6.5" stroke="#666"/></svg>
<div class="t" style="left:714.7px;top:48.78px;font-size:10px;line-height:11.50px;color:#2e2e2e;letter-spacing:-0.2px">input_keter...</div>
<svg class="a" style="left:793px;top:49px" width="9" height="8" viewBox="0 0 9 8"><rect x="0.5" y="0.5" width="8" height="7" rx="1" fill="#fff" stroke="#888"/><path d="M2.5 4H6.5" stroke="#666"/></svg>
<div class="t" style="left:804.7px;top:48.78px;font-size:10px;line-height:11.50px;color:#2e2e2e;letter-spacing:-0.2px">input_isi_k...</div>
<div class="a" style="left:879px;top:60px;width:18px;height:3px;background:#e6e6e6;"></div>
<svg class="a" style="left:881px;top:49px" width="6" height="4" viewBox="0 0 6 4"><path d="M0.5 0.5L2.5 2L0.5 3.5M3 0.5L5 2L3 3.5" stroke="#222" stroke-width="1" fill="none"/></svg>
<div class="t" style="left:886px;top:51.47px;font-size:6px;line-height:6.90px;color:#333;letter-spacing:-0.3px">19</div>
<svg class="a" style="left:224px;top:71px" width="9" height="9" viewBox="0 0 9 9"><rect x="0.5" y="0.5" width="8" height="8" rx="1" fill="#f2f2f2" stroke="#c4c4c4"/><path d="M4.5 2.5V6.5M2.5 4.5H6.5" stroke="#c0c0c0"/></svg>
<div class="t" style="left:235px;top:70.32px;font-size:10.5px;line-height:12.07px;color:#2e2e2e;">Add</div>
<svg class="a" style="left:264px;top:73px" width="6.5" height="3.7" viewBox="0 0 6.5 3.7"><path d="M0 0H6.5L3.25 3.7Z" fill="#111"/></svg>
<svg class="a" style="left:279px;top:71px" width="9" height="9" viewBox="0 0 9 9"><circle cx="4.5" cy="4.5" r="3.8" fill="#f4f4f4" stroke="#bdbdbd" stroke-width="1.1"/><path d="M4.5 2.2V4.7L6 5.8" stroke="#bdbdbd" stroke-width="0.9" fill="none"/></svg>
<div class="t" style="left:290px;top:70.78px;font-size:10px;line-height:11.50px;color:#2e2e2e;letter-spacing:0.05px">Recent keywords</div>
<svg class="a" style="left:376px;top:73px" width="6.5" height="3.7" viewBox="0 0 6.5 3.7"><path d="M0 0H6.5L3.25 3.7Z" fill="#111"/></svg>
<svg class="a" style="left:389px;top:70px" width="8" height="10" viewBox="0 0 8 10"><rect x="1" y="2.5" width="6" height="7" rx="0.5" fill="#e8c0c0" stroke="#c9a0a0" stroke-width="0.8"/><path d="M0 1.5H8M3 0.5H5" stroke="#c9a0a0"/></svg>
<div class="t" style="left:399.5px;top:70.78px;font-size:10px;line-height:11.50px;color:#2e2e2e;">Delete</div>
<svg class="a" style="left:434.5px;top:71px" width="9" height="9" viewBox="0 0 9 9"><rect x="0.5" y="0.5" width="8" height="8" rx="1" fill="#f2f2f2" stroke="#c4c4c4"/><path d="M4.5 2V7M2.5 4L4.5 2L6.5 4" stroke="#b0b0b0" fill="none"/></svg>
<div class="t" style="left:446px;top:70.78px;font-size:10px;line-height:11.50px;color:#2e2e2e;">Move up</div>
<svg class="a" style="left:493px;top:71px" width="9" height="9" viewBox="0 0 9 9"><rect x="0.5" y="0.5" width="8" height="8" rx="1" fill="#f2f2f2" stroke="#c4c4c4"/><path d="M4.5 2V7M2.5 5L4.5 7L6.5 5" stroke="#b0b0b0" fill="none"/></svg>
<div class="t" style="left:504.3px;top:70.78px;font-size:10px;line-height:11.50px;color:#2e2e2e;letter-spacing:0.1px">Move down</div>
<svg class="a" style="left:564.5px;top:70px" width="9" height="10" viewBox="0 0 9 10"><rect x="0.5" y="1.5" width="7" height="8" fill="#d8ecd0" stroke="#8cbf7a" stroke-width="0.8"/><path d="M2.5 7.5L8 1.5" stroke="#5aa048" stroke-width="1.4"/></svg>
<div class="t" style="left:576.5px;top:70.78px;font-size:10px;line-height:11.50px;color:#2e2e2e;">Edit tags</div>
<svg class="a" style="left:622px;top:70.5px" width="9" height="9" viewBox="0 0 9 9"><circle cx="4.5" cy="4.5" r="3" fill="none" stroke="#8a8a8a" stroke-width="2"/><path d="M4.5 0V9M0 4.5H9M1.3 1.3L7.7 7.7M7.7 1.3L1.3 7.7" stroke="#8a8a8a" stroke-width="1.3"/><circle cx="4.5" cy="4.5" r="1.2" fill="#f8f8f8"/></svg>
<div class="t" style="left:633.5px;top:70.78px;font-size:10px;line-height:11.50px;color:#2e2e2e;">Set default view</div>
<svg class="a" style="left:780px;top:71px" width="9" height="9" viewBox="0 0 9 9"><rect x="0.5" y="0.5" width="8" height="8" rx="1" fill="#f2f2f2" stroke="#c4c4c4"/><path d="M4.5 2.5V6.5M2.5 4.5H6.5" stroke="#c0c0c0"/></svg>
<div class="t" style="left:791px;top:70.32px;font-size:10.5px;line-height:12.07px;color:#2e2e2e;">Add to test suite</div>
<svg class="a" style="left:876.5px;top:73px" width="6.5" height="3.7" viewBox="0 0 6.5 3.7"><path d="M0 0H6.5L3.25 3.7Z" fill="#111"/></svg>
<svg class="a" style="left:890px;top:66.5px" width="72" height="18" viewBox="0 0 72 18"><rect x="0.5" y="0.5" width="75" height="17" rx="2" fill="#fcfcfc" stroke="#d4d4d4"/><path d="M5 3.8H13.5V12.8H5Z" fill="#4aa8e8"/><path d="M7 5.8H10C11.5 5.8 11.8 7 11.8 8.3C11.8 9.6 11.5 10.8 10 10.8H7Z" fill="#fff"/><path d="M8.5 7.3V9.3L10.2 8.3Z" fill="#4aa8e8"/></svg>
<div class="t" style="left:906px;top:70.32px;font-size:10.5px;line-height:12.07px;color:#2e2e2e;">View Test Runs</div>
<div class="a" style="left:219px;top:89px;width:741px;height:1px;background:#a8a8a8;"></div>
<div class="a" style="left:219px;top:89px;width:1px;height:271px;background:#a8a8a8;"></div>
<div class="a" style="left:219px;top:359px;width:741px;height:1px;background:#a0a0a0;"></div>
<div class="a" style="left:220px;top:90px;width:740px;height:255px;background:#fff;"></div>
<div class="a" style="left:220px;top:345px;width:740px;height:14px;background:#f0f0f0;"></div>
<div class="a" style="left:235px;top:349px;width:658px;height:6px;background:#858585;"></div>
<div class="a" style="left:220px;top:123px;width:740px;height:1px;background:#ededed;"></div>
<div class="a" style="left:220px;top:139px;width:740px;height:1px;background:#ededed;"></div>
<div class="a" style="left:220px;top:155px;width:740px;height:1px;background:#ededed;"></div>
<div class="a" style="left:220px;top:171px;width:740px;height:1px;background:#ededed;"></div>
<div class="a" style="left:220px;top:187px;width:740px;height:1px;background:#ededed;"></div>
<div class="a" style="left:220px;top:203px;width:740px;height:1px;background:#ededed;"></div>
<div class="a" style="left:220px;top:219px;width:740px;height:1px;background:#ededed;"></div>
<div class="a" style="left:220px;top:235px;width:740px;height:1px;background:#ededed;"></div>
<div class="a" style="left:220px;top:251px;width:740px;height:1px;background:#ededed;"></div>
<div class="a" style="left:220px;top:267px;width:740px;height:1px;background:#ededed;"></div>
<div class="a" style="left:220px;top:283px;width:740px;height:1px;background:#ededed;"></div>
<div class="a" style="left:220px;top:299px;width:740px;height:1px;background:#ededed;"></div>
<div class="a" style="left:220px;top:315px;width:740px;height:1px;background:#ededed;"></div>
<div class="a" style="left:220px;top:331px;width:740px;height:1px;background:#ededed;"></div>
<div class="a" style="left:450px;top:90px;width:1px;height:255px;background:#ededed;"></div>
<div class="a" style="left:634px;top:90px;width:1px;height:255px;background:#ededed;"></div>
<div class="a" style="left:787px;top:90px;width:1px;height:255px;background:#ededed;"></div>
<div class="a" style="left:901px;top:90px;width:1px;height:255px;background:#ededed;"></div>
<div class="t" style="left:224px;top:94.78px;font-size:10px;line-height:11.50px;color:#2e2e2e;">Item</div>
<div class="t" style="left:454.3px;top:94.78px;font-size:10px;line-height:11.50px;color:#2e2e2e;">Object</div>
<div class="t" style="left:638.5px;top:94.78px;font-size:10px;line-height:11.50px;color:#2e2e2e;">Input</div>
<div class="t" style="left:791px;top:94.78px;font-size:10px;line-height:11.50px;color:#2e2e2e;">Output</div>
<div class="t" style="left:905.5px;top:94.78px;font-size:10px;line-height:11.50px;color:#2e2e2e;">Description</div>
<svg class="a" style="left:235px;top:112px" width="10" height="7" viewBox="0 0 10 7"><rect x="0" y="0" width="10" height="7" rx="1" fill="#3b9ae0"/><path d="M2 2.5h2.5v2h-2.5zM5.5 2.5h2.5v2h-2.5z" fill="none" stroke="#cfe8fb" stroke-width="0.8"/></svg>
<div class="t" style="left:248px;top:110.78px;font-size:10px;line-height:11.50px;color:#2e2e2e;">1 - Binary Statement</div>
<div class="a" style="left:636px;top:107px;width:150px;height:15px">
<div class="t" style="left:1px;top:3.79px;font-size:10px;line-height:11.5px;color:#2e2e2e">data = findTestData("Data Files/Sekre AB2-Pengirim")</div>
</div>
<svg class="a" style="left:235px;top:128px" width="10" height="7" viewBox="0 0 10 7"><path d="M1 3.8H5" stroke="#a8d098" stroke-width="0.9"/><path d="M5.2 1.8L8.6 5.4M8.6 1.8L5.2 5.4" stroke="#e8807a" stroke-width="0.9"/></svg>
<div class="t" style="left:248px;top:126.78px;font-size:10px;line-height:11.50px;color:#2e2e2e;">2 - Open Browser</div>
<div class="a" style="left:636px;top:123px;width:150px;height:15px">
<div class="t" style="left:1px;top:3.79px;font-size:10px;line-height:11.5px;color:#2e2e2e">""</div>
</div>
<svg class="a" style="left:235px;top:144px" width="10" height="7" viewBox="0 0 10 7"><path d="M1 3.8H5" stroke="#a8d098" stroke-width="0.9"/><path d="M5.2 1.8L8.6 5.4M8.6 1.8L5.2 5.4" stroke="#e8807a" stroke-width="0.9"/></svg>
<div class="t" style="left:248px;top:142.78px;font-size:10px;line-height:11.50px;color:#2e2e2e;">3 - Maximize Window</div>
<svg class="a" style="left:235px;top:160px" width="10" height="7" viewBox="0 0 10 7"><rect x="0" y="0" width="10" height="7" rx="1" fill="#3b9ae0"/><path d="M2 2.5h2.5v2h-2.5zM5.5 2.5h2.5v2h-2.5z" fill="none" stroke="#cfe8fb" stroke-width="0.8"/></svg>
<div class="t" style="left:248px;top:158.78px;font-size:10px;line-height:11.50px;color:#2e2e2e;">4 - Binary Statement</div>
<div class="a" style="left:636px;top:155px;width:150px;height:15px">
<div class="t" style="left:1px;top:3.79px;font-size:10px;line-height:11.5px;color:#2e2e2e">url = GlobalVariable.url_memo_internal</div>
</div>
<svg class="a" style="left:235px;top:176px" width="10" height="7" viewBox="0 0 10 7"><path d="M1 3.8H5" stroke="#a8d098" stroke-width="0.9"/><path d="M5.2 1.8L8.6 5.4M8.6 1.8L5.2 5.4" stroke="#e8807a" stroke-width="0.9"/></svg>
<div class="t" style="left:248px;top:174.78px;font-size:10px;line-height:11.50px;color:#2e2e2e;">5 - Navigate To Url</div>
<div class="a" style="left:636px;top:171px;width:150px;height:15px">
<div class="t" style="left:1px;top:3.79px;font-size:10px;line-height:11.5px;color:#2e2e2e">GlobalVariable.url_memo_internal</div>
</div>
<svg class="a" style="left:235px;top:191px" width="10" height="9" viewBox="0 0 10 9"><rect x="1.3" y="0.8" width="7.6" height="6.6" rx="2" fill="none" stroke="#9ccf8c" stroke-width="0.9"/><circle cx="1.3" cy="4.1" r="0.9" fill="#4aa83a"/><circle cx="8.9" cy="4.1" r="0.9" fill="#4aa83a"/></svg>
<svg class="a" style="left:224px;top:193px" width="4" height="6" viewBox="0 0 4 6"><path d="M0.5 0.5L3.3 3L0.5 5.5" stroke="#8a8a8a" fill="none" stroke-width="0.9"/></svg>
<div class="t" style="left:248px;top:190.78px;font-size:10px;line-height:11.50px;color:#2e2e2e;">6 - For Loop Statement</div>
<div class="a" style="left:636px;top:187px;width:150px;height:15px">
<div class="t" style="left:1px;top:3.79px;font-size:10px;line-height:11.5px;color:#2e2e2e">(i = 1; i &lt;= 2; (i++))</div>
</div>
<svg class="a" style="left:235px;top:208px" width="10" height="7" viewBox="0 0 10 7"><path d="M1 3.8H5" stroke="#a8d098" stroke-width="0.9"/><path d="M5.2 1.8L8.6 5.4M8.6 1.8L5.2 5.4" stroke="#e8807a" stroke-width="0.9"/></svg>
<div class="t" style="left:248px;top:206.78px;font-size:10px;line-height:11.50px;color:#2e2e2e;">7 - Close Browser</div>
<div class="a" style="left:216px;top:360px;width:744px;height:20px;background:#f0f0f0;"></div>
<div class="a" style="left:216px;top:362px;width:744px;height:15px;background:#f7f7f7;"></div>
<div class="a" style="left:217px;top:362px;width:49px;height:15px;background:#fafafa;"></div>
<div class="a" style="left:266px;top:362px;width:1px;height:15px;background:#e0e0e0;"></div>
<svg class="a" style="left:220px;top:366px" width="7" height="8" viewBox="0 0 7 8"><path d="M0.5 0.5L6.5 3.5L4 4.2L6.2 7L5 7.6L3 4.8L1.2 6.5Z" fill="#333"/></svg>
<div class="t" style="left:230px;top:364.79px;font-size:10px;line-height:11.50px;color:#2e2e2e;">Manual</div>
<svg class="a" style="left:269.5px;top:365px" width="9" height="7" viewBox="0 0 9 7"><path d="M2.5 1L0.5 3.5L2.5 6M6.5 1L8.5 3.5L6.5 6M5.5 0.5L3.5 6.5" stroke="#777" stroke-width="0.8" fill="none"/></svg>
<div class="t" style="left:280.5px;top:364.79px;font-size:10px;line-height:11.50px;color:#2e2e2e;">Script</div>
<div class="t" style="left:312.3px;top:360.2px;font-family:'Liberation Serif',serif;font-weight:bold;font-style:italic;font-size:15px;line-height:15px;color:#333;letter-spacing:0">x</div>
<div class="t" style="left:323.7px;top:364.79px;font-size:10px;line-height:11.50px;color:#2e2e2e;">Variables</div>
<svg class="a" style="left:369.5px;top:365px" width="9" height="7" viewBox="0 0 9 7"><path d="M2.5 1L0.5 3.5L2.5 6M6.5 1L8.5 3.5L6.5 6M5.5 0.5L3.5 6.5" stroke="#777" stroke-width="0.8" fill="none"/></svg>
<div class="t" style="left:380px;top:364.79px;font-size:10px;line-height:11.50px;color:#2e2e2e;">Variables (Script mode)</div>
<svg class="a" style="left:491px;top:364px" width="8" height="10" viewBox="0 0 8 10"><ellipse cx="4" cy="1.8" rx="3.5" ry="1.5" fill="none" stroke="#888" stroke-width="0.8"/><path d="M0.5 1.8V8.2C0.5 9.2 7.5 9.2 7.5 8.2V1.8M0.5 4C0.5 5 7.5 5 7.5 4M0.5 6.2C0.5 7.2 7.5 7.2 7.5 6.2" stroke="#888" stroke-width="0.8" fill="none"/></svg>
<div class="t" style="left:502px;top:364.79px;font-size:10px;line-height:11.50px;color:#2e2e2e;">Data Binding</div>
<svg class="a" style="left:565px;top:365px" width="10" height="7" viewBox="0 0 10 7"><rect x="0" y="0.5" width="4.5" height="6" fill="#444"/><rect x="5.5" y="0.5" width="4.5" height="6" fill="#444"/><path d="M1.5 3.5H8.5" stroke="#ddd" stroke-width="0.8"/></svg>
<div class="t" style="left:577px;top:364.79px;font-size:10px;line-height:11.50px;color:#2e2e2e;">Integration</div>
<svg class="a" style="left:632px;top:365px" width="9" height="8" viewBox="0 0 9 8"><rect x="0.5" y="0.5" width="8" height="7" fill="none" stroke="#888" stroke-width="0.8"/><path d="M0.5 3H8.5M0.5 5.3H8.5M3 0.5V7.5" stroke="#888" stroke-width="0.7"/></svg>
<div class="t" style="left:643.7px;top:364.79px;font-size:10px;line-height:11.50px;color:#2e2e2e;">Properties</div>
<div class="a" style="left:216px;top:377px;width:744px;height:1px;background:#dcdcdc;"></div>
<div class="a" style="left:216px;top:379px;width:744px;height:161px;background:#f5f5f5;"></div>
<div class="a" style="left:216px;top:380px;width:744px;height:15px;background:#e8e8e8;"></div>
<div class="a" style="left:390px;top:380px;width:66px;height:15px;background:#f3f3f3;"></div>
<svg class="a" style="left:218px;top:384px" width="8" height="9" viewBox="0 0 8 9"><rect x="0.5" y="0.5" width="7" height="8" fill="#fff" stroke="#999" stroke-width="0.8"/><circle cx="3.5" cy="3" r="1.6" fill="#e04040"/><rect x="1.5" y="5.5" width="4.5" height="2.5" fill="#e8b040"/></svg>
<div class="t" style="left:229px;top:383.79px;font-size:10px;line-height:11.50px;color:#2e2e2e;">Problems</div>
<svg class="a" style="left:278.5px;top:384px" width="8" height="9" viewBox="0 0 8 9"><rect x="0.5" y="0.5" width="7" height="6.5" rx="1" fill="#cfe4f6" stroke="#3b7fc4" stroke-width="1"/><path d="M2 8.5H6" stroke="#3b7fc4"/><path d="M2 3.5h4" stroke="#3b7fc4" stroke-width="0.8"/></svg>
<div class="t" style="left:288.7px;top:383.79px;font-size:10px;line-height:11.50px;color:#2e2e2e;">Event Log</div>
<svg class="a" style="left:340px;top:384px" width="8" height="9" viewBox="0 0 8 9"><rect x="0.5" y="0.5" width="7" height="6.5" rx="1" fill="#cfe4f6" stroke="#3b7fc4" stroke-width="1"/><path d="M2 8.5H6" stroke="#3b7fc4"/><path d="M2 3.5h4" stroke="#3b7fc4" stroke-width="0.8"/></svg>
<div class="t" style="left:350px;top:383.79px;font-size:10px;line-height:11.50px;color:#2e2e2e;">Console</div>
<svg class="a" style="left:393.5px;top:383.5px" width="8" height="10" viewBox="0 0 8 10"><rect x="0.5" y="0.5" width="7" height="9" fill="#fff" stroke="#aaa" stroke-width="0.8"/><path d="M2 3H6M2 5H6M2 7H6" stroke="#7ab0d8" stroke-width="0.8"/></svg>
<div class="t" style="left:404.5px;top:383.79px;font-size:10px;line-height:11.50px;color:#2e2e2e;">Log Viewer</div>
<svg class="a" style="left:460px;top:384px" width="9" height="9" viewBox="0 0 9 9"><rect x="0.5" y="0.5" width="8" height="8" rx="1" fill="#9b59d0" stroke="#7a3fb0" stroke-width="0.6"/><path d="M2 2L7 7M7 2L2 7" stroke="#e8d8f8" stroke-width="0.9"/></svg>
<div class="t" style="left:471.2px;top:383.79px;font-size:10px;line-height:11.50px;color:#2e2e2e;">Self-healing Insights</div>
<svg class="a" style="left:921px;top:384px" width="10" height="8" viewBox="0 0 10 8"><ellipse cx="5" cy="4" rx="4.5" ry="3.3" fill="none" stroke="#888" stroke-width="1"/><circle cx="5" cy="4" r="1.7" fill="none" stroke="#888" stroke-width="0.9"/></svg>
<svg class="a" style="left:936px;top:386px" width="6.5" height="3.5" viewBox="0 0 6.5 3.5"><path d="M0 0H6.5L3.25 3.5Z" fill="#111"/></svg>
<svg class="a" style="left:946px;top:381px" width="16" height="13" viewBox="0 0 16 13"><rect x="0" y="0" width="16" height="13" rx="1" fill="#cfe4f6"/><path d="M3.5 1.5V11M3.5 5H7M3.5 9.5H7" stroke="#8aa8c0" stroke-width="0.8"/><rect x="7" y="3.5" width="6" height="3" fill="#b8cf80"/><rect x="7" y="8" width="6" height="3" fill="#b8cf80"/></svg>
<div class="t" style="left:225px;top:409.79px;font-size:10px;line-height:11.50px;color:#2e2e2e;">Runs: 1/1</div>
<div class="t" style="left:302.7px;top:409.79px;font-size:10px;line-height:11.50px;color:#2e2e2e;letter-spacing:-0.3px">Passes: 1</div>
<div class="t" style="left:380.7px;top:409.79px;font-size:10px;line-height:11.50px;color:#2e2e2e;letter-spacing:-0.25px">Failures: 0</div>
<div class="t" style="left:458.3px;top:409.79px;font-size:10px;line-height:11.50px;color:#2e2e2e;">Errors: 0</div>
<div class="t" style="left:536px;top:409.79px;font-size:10px;line-height:11.50px;color:#2e2e2e;">Skips: 0</div>
<div class="a" style="left:616px;top:406px;width:344px;height:16px;background:#c8f0c8;"></div>
<div class="a" style="left:617px;top:407px;width:343px;height:14px;background:#08a82a;"></div>
<div class="a" style="left:232px;top:433px;width:389px;height:1px;background:#a8a8a8;"></div>
<div class="a" style="left:232px;top:433px;width:1px;height:107px;background:#a8a8a8;"></div>
<div class="a" style="left:620px;top:433px;width:1px;height:107px;background:#a8a8a8;"></div>
<div class="a" style="left:233px;top:434px;width:387px;height:106px;background:#fff;"></div>
<div class="a" style="left:606px;top:434px;width:14px;height:106px;background:#f0f0f0;"></div>
<div class="a" style="left:610px;top:448px;width:6px;height:59px;background:#858585;"></div>
<div class="a" style="left:247px;top:435px;width:358px;height:14px;background:#d9d9d9;"></div>
<svg class="a" style="left:222px;top:435px" width="7" height="9" viewBox="0 0 7 9"><path d="M3.5 0V9M1 1.5L3.5 3.5L6 1.5M1 7.5L3.5 5.5L6 7.5" stroke="#9aa" stroke-width="0.8" fill="none"/></svg>
<svg class="a" style="left:222px;top:448px" width="7" height="9" viewBox="0 0 7 9"><path d="M3.5 0V9M1 3L3.5 0.8L6 3M1 6L3.5 8.2L6 6" stroke="#9aa" stroke-width="0.8" fill="none"/></svg>
<svg class="a" style="left:222px;top:460px" width="7" height="8" viewBox="0 0 7 8"><rect x="0.5" y="0.5" width="6" height="7" rx="1" fill="#f2f2f2" stroke="#b8b8b8" stroke-width="0.8"/><path d="M3.5 2V6M2 3.5L3.5 2L5 3.5" stroke="#999" stroke-width="0.7" fill="none"/></svg>
<svg class="a" style="left:222px;top:473px" width="7" height="8" viewBox="0 0 7 8"><rect x="0.5" y="0.5" width="6" height="7" rx="1" fill="#f2f2f2" stroke="#b8b8b8" stroke-width="0.8"/><path d="M3.5 2V6M2 4.5L3.5 6L5 4.5" stroke="#999" stroke-width="0.7" fill="none"/></svg>
<svg class="a" style="left:221px;top:485px" width="9" height="9" viewBox="0 0 9 9"><path d="M0 0.5H6M0 2.5H4M0 4.5H3" stroke="#999" stroke-width="0.6"/><path d="M4.3 4.3L8 8M8 4.3L4.3 8" stroke="#e03030" stroke-width="1.1"/></svg>
<svg class="a" style="left:236px;top:439px" width="7" height="5" viewBox="0 0 7 5"><path d="M0.5 0.8L3.5 3.8L6.5 0.8" stroke="#555" stroke-width="0.9" fill="none"/></svg>
<svg class="a" style="left:249px;top:437px" width="10" height="9" viewBox="0 0 10 9"><path d="M0 1.2H6M0 3.4H2.5M0 5.6H2" stroke="#8a8a8a" stroke-width="0.7"/><circle cx="6.2" cy="5.8" r="3" fill="#5cbf50"/><path d="M4.6 5.8L5.8 7L7.8 4.8" stroke="#fff" stroke-width="0.9" fill="none"/></svg>
<div class="a" style="left:233px;top:434px;width:372px;height:106px">
<div class="t" style="left:28px;top:2.79px;font-size:10px;line-height:11.5px">Test Cases/Pembuatan Naskah Memo Internal/Proses Kirim/PA_06-Proses Kirim_Sekretaris</div>
</div>
<div class="a" style="left:233px;top:434px;width:373px;height:106px">
<div class="t" style="left:42.19999999999999px;top:18.79px;font-size:10px;line-height:11.5px">1 - data = findTestData("Data Files/Sekre AB2-Pengirim") <span style="color:#4a93bd">(0.329s)</span></div>
<div class="t" style="left:42.19999999999999px;top:34.78px;font-size:10px;line-height:11.5px">2 - openBrowser("") <span style="color:#4a93bd">(1.237s)</span></div>
<svg class="a" style="left:29.5px;top:35px" width="10" height="9" viewBox="0 0 10 9"><path d="M0 1.2H6M0 3.4H2.5M0 5.6H2" stroke="#8a8a8a" stroke-width="0.7"/><circle cx="6.2" cy="5.8" r="3" fill="#5cbf50"/><path d="M4.6 5.8L5.8 7L7.8 4.8" stroke="#fff" stroke-width="0.9" fill="none"/></svg>
<svg class="a" style="left:18px;top:36px" width="5" height="7" viewBox="0 0 5 7"><path d="M0.8 0.5L3.8 3.5L0.8 6.5" stroke="#888" stroke-width="0.9" fill="none"/></svg>
<div class="t" style="left:42.19999999999999px;top:50.78px;font-size:10px;line-height:11.5px">3 - maximizeWindow() <span style="color:#4a93bd">(0.054s)</span></div>
<svg class="a" style="left:29.5px;top:51px" width="10" height="9" viewBox="0 0 10 9"><path d="M0 1.2H6M0 3.4H2.5M0 5.6H2" stroke="#8a8a8a" stroke-width="0.7"/><circle cx="6.2" cy="5.8" r="3" fill="#5cbf50"/><path d="M4.6 5.8L5.8 7L7.8 4.8" stroke="#fff" stroke-width="0.9" fill="none"/></svg>
<div class="t" style="left:42.19999999999999px;top:66.78px;font-size:10px;line-height:11.5px">4 - url = url_memo_internal <span style="color:#4a93bd">(0.082s)</span></div>
<div class="t" style="left:42.19999999999999px;top:82.78px;font-size:10px;line-height:11.5px">5 - navigateToUrl(url_memo_internal) <span style="color:#4a93bd">(1.842s)</span></div>
<svg class="a" style="left:29.5px;top:83px" width="10" height="9" viewBox="0 0 10 9"><path d="M0 1.2H6M0 3.4H2.5M0 5.6H2" stroke="#8a8a8a" stroke-width="0.7"/><circle cx="6.2" cy="5.8" r="3" fill="#5cbf50"/><path d="M4.6 5.8L5.8 7L7.8 4.8" stroke="#fff" stroke-width="0.9" fill="none"/></svg>
<div class="t" style="left:42.19999999999999px;top:98.78px;font-size:10px;line-height:11.5px">6 - for ((i = 1, i &lt;= 2, (i++)))  <span style="color:#4a93bd">(109.474s)</span></div>
<svg class="a" style="left:18px;top:100px" width="5" height="7" viewBox="0 0 5 7"><path d="M0.8 0.5L3.8 3.5L0.8 6.5" stroke="#888" stroke-width="0.9" fill="none"/></svg>
</div>
<div class="a" style="left:622px;top:433px;width:338px;height:1px;background:#a8a8a8;"></div>
<div class="a" style="left:622px;top:433px;width:1px;height:107px;background:#a8a8a8;"></div>
<div class="a" style="left:623px;top:434px;width:337px;height:106px;background:#fff;"></div>
<div class="a" style="left:623px;top:434px;width:337px;height:106px">
<div class="m" style="left:1.2px;top:2.10px;font-size:10.5px;line-height:11px;color:#111;-webkit-text-stroke:0.25px #111">10-29-2024 10:40:46 AM Test Cases/Pembuatan Naskah Memo</div>
<div class="m" style="left:1.2px;top:15.40px;font-size:10.5px;line-height:11px;color:#111;-webkit-text-stroke:0.25px #111">Internal/Proses Kirim/PA_06-Proses Kirim_Sekretaris (Koreksi</div>
<div class="m" style="left:1.2px;top:28.70px;font-size:10.5px;line-height:11px;color:#111;-webkit-text-stroke:0.25px #111">atau Kembalikan Tata Naskah)</div>
<div class="m" style="left:1.2px;top:55.30px;font-size:10.5px;line-height:11px;color:#111;-webkit-text-stroke:0.25px #111">Elapsed time: 1m - 53.744s</div>
<div class="m" style="left:1.2px;top:81.90px;font-size:10.5px;line-height:11px;color:#111;-webkit-text-stroke:0.25px #111">Test Cases/Pembuatan Naskah Memo Internal/Proses Kirim/PA_06-</div>
<div class="m" style="left:1.2px;top:95.20px;font-size:10.5px;line-height:11px;color:#111;-webkit-text-stroke:0.25px #111">Proses Kirim_Sekretaris (Koreksi atau Kembalikan Tata Naskah)</div>
</div>
</body></html>
